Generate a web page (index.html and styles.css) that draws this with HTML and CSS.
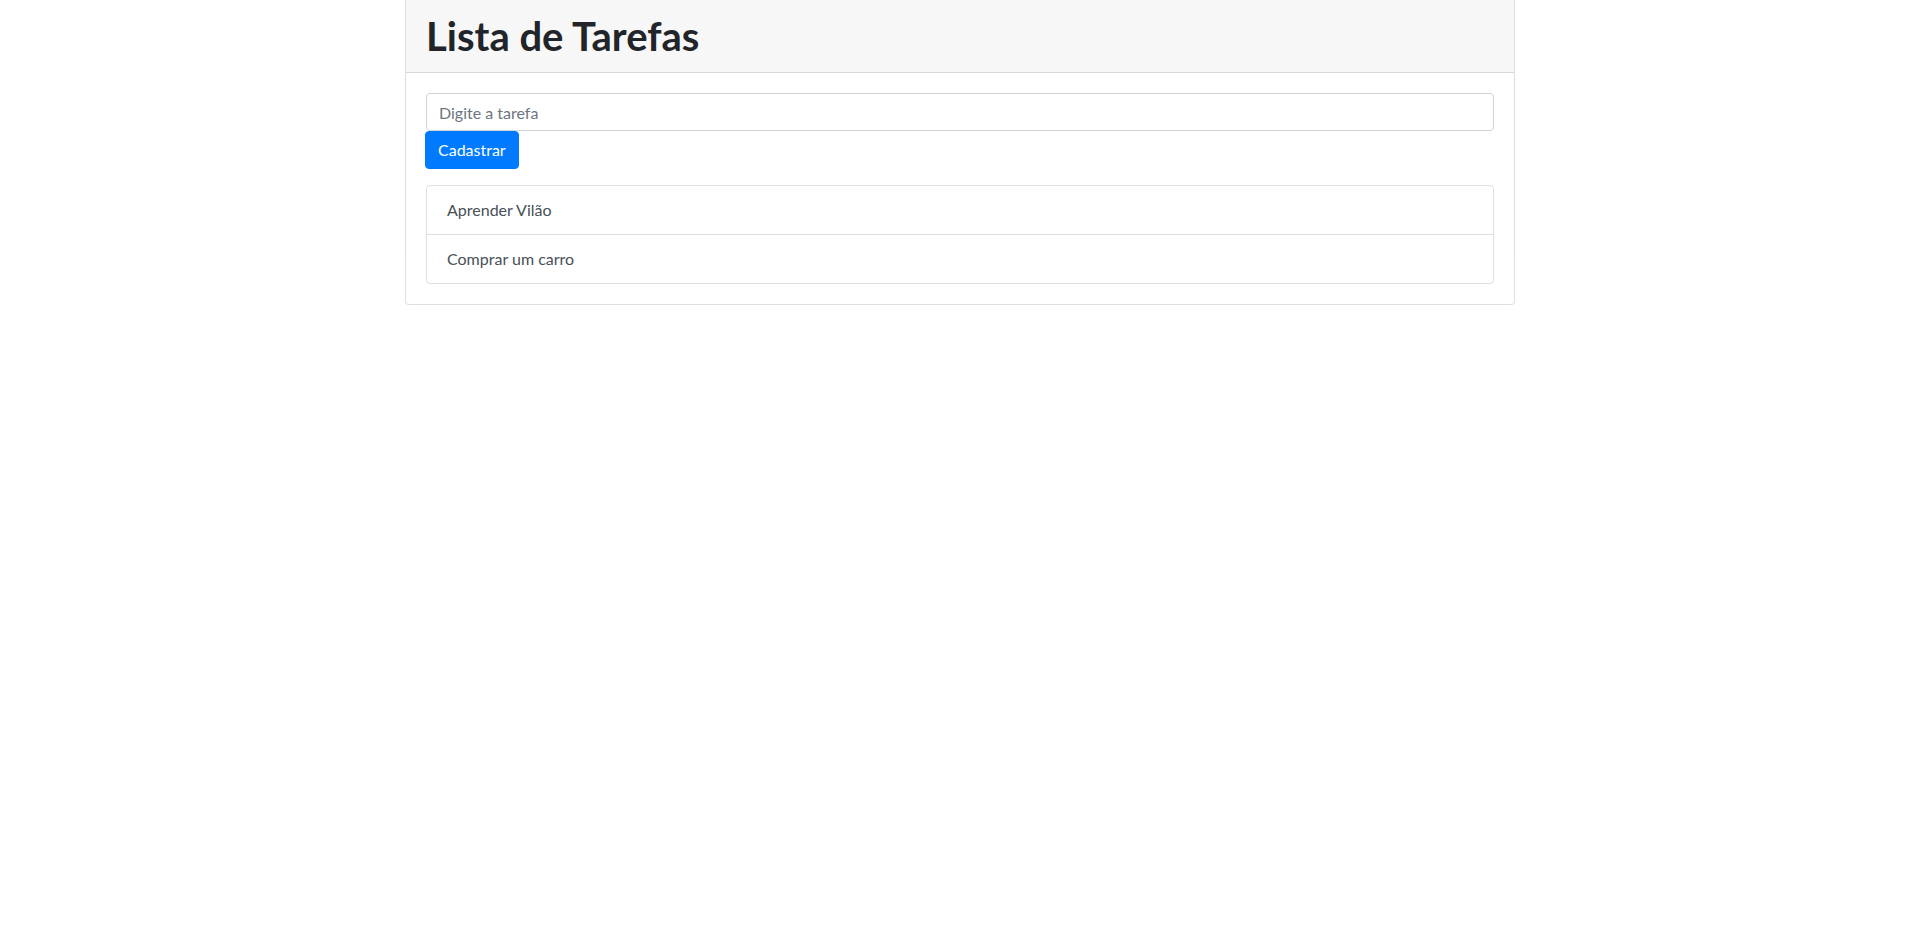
FILE: index.html
```html
<!DOCTYPE html>
<html lang="pt-BR">
<head>
<meta charset="utf-8">
<title>Lista de Tarefas</title>
<link rel="stylesheet" href="styles.css">
</head>
<body>
<div class="container">
  <div class="card">
    <div class="card-header">
      <h1 class="title">Lista de Tarefas</h1>
    </div>
    <div class="card-body">
      <form class="task-form">
        <input class="form-control" type="text" placeholder="Digite a tarefa">
        <button class="btn" type="button">Cadastrar</button>
      </form>
      <ul class="list-group">
        <li class="list-group-item">Aprender Vilão</li>
        <li class="list-group-item">Comprar um carro</li>
      </ul>
    </div>
  </div>
</div>
</body>
</html>
```
FILE: styles.css
```css
* { box-sizing: border-box; }
html, body { margin: 0; padding: 0; }
body {
  font-family: Lato, "Open Sans", Arial, sans-serif;
  font-size: 16px;
  line-height: 1.5;
  color: #212529;
  background: #fff;
}
.container {
  max-width: 1140px;
  margin: 0 auto;
  padding: 0 15px;
}
.card {
  border: 1px solid rgba(0,0,0,.125);
  border-top: none;
  border-radius: 0 0 4px 4px;
  background: #fff;
}
.card-header {
  padding: 12px 20px;
  background: rgba(0,0,0,.03);
  border-bottom: 1px solid rgba(0,0,0,.125);
}
.title {
  margin: 0;
  font-size: 40px;
  font-weight: 700;
  line-height: 1.2;
  color: #212529;
}
.card-body { padding: 20px; }
.task-form { display: flex; flex-direction: column; align-items: flex-start; }
.form-control {
  display: block;
  width: 100%;
  height: 38px;
  padding: 6px 12px;
  font-family: inherit;
  font-size: 16px;
  line-height: 1.5;
  color: #495057;
  background: #fff;
  border: 1px solid #ced4da;
  border-radius: 4px;
  margin: 0;
}
.form-control::placeholder { color: #6c757d; opacity: 1; }
.btn {
  margin: 0 0 0 -1px;
  height: 38px;
  padding: 6px 12px;
  font-family: inherit;
  font-size: 16px;
  line-height: 1.5;
  color: #fff;
  background: #007bff;
  border: 1px solid #007bff;
  border-radius: 4px;
  cursor: pointer;
}
.list-group {
  list-style: none;
  margin: 16px 0 0;
  padding: 0;
  border: 1px solid rgba(0,0,0,.125);
  border-radius: 4px;
}
.list-group-item {
  padding: 12px 20px;
  line-height: 24px;
  color: #495057;
}
.list-group-item + .list-group-item { border-top: 1px solid rgba(0,0,0,.125); }
```
